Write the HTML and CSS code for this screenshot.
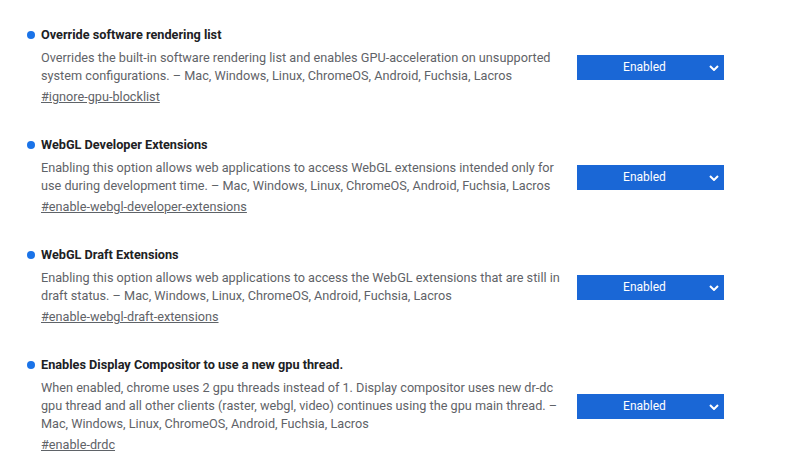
FILE: index.html
```
<!DOCTYPE html>
<html>
<head>
<meta charset="utf-8">
<link rel="stylesheet" href="styles.css">
</head>
<body>
<div class="flags">
  <div class="experiment">
    <h2 class="name"><span class="dot"></span>Override software rendering list</h2>
    <div class="row">
      <p class="desc">Overrides the built-in software rendering list and enables GPU-acceleration on unsupported system configurations. – Mac, Windows, Linux, ChromeOS, Android, Fuchsia, Lacros</p>
      <div class="select"><span>Enabled</span><svg class="chev" viewBox="0 0 10 6" width="10" height="6"><path d="M1 1 L5 5 L9 1" fill="none" stroke="#fff" stroke-width="2"/></svg></div>
    </div>
    <a class="link" href="#">#ignore-gpu-blocklist</a>
  </div>
  <div class="experiment">
    <h2 class="name"><span class="dot"></span>WebGL Developer Extensions</h2>
    <div class="row">
      <p class="desc">Enabling this option allows web applications to access WebGL extensions intended only for use during development time. – Mac, Windows, Linux, ChromeOS, Android, Fuchsia, Lacros</p>
      <div class="select"><span>Enabled</span><svg class="chev" viewBox="0 0 10 6" width="10" height="6"><path d="M1 1 L5 5 L9 1" fill="none" stroke="#fff" stroke-width="2"/></svg></div>
    </div>
    <a class="link" href="#">#enable-webgl-developer-extensions</a>
  </div>
  <div class="experiment">
    <h2 class="name"><span class="dot"></span>WebGL Draft Extensions</h2>
    <div class="row">
      <p class="desc">Enabling this option allows web applications to access the WebGL extensions that are still in draft status. – Mac, Windows, Linux, ChromeOS, Android, Fuchsia, Lacros</p>
      <div class="select"><span>Enabled</span><svg class="chev" viewBox="0 0 10 6" width="10" height="6"><path d="M1 1 L5 5 L9 1" fill="none" stroke="#fff" stroke-width="2"/></svg></div>
    </div>
    <a class="link" href="#">#enable-webgl-draft-extensions</a>
  </div>
  <div class="experiment">
    <h2 class="name"><span class="dot"></span>Enables Display Compositor to use a new gpu thread.</h2>
    <div class="row">
      <p class="desc">When enabled, chrome uses 2 gpu threads instead of 1. Display compositor uses new dr-dc gpu thread and all other clients (raster, webgl, video) continues using the gpu main thread. – Mac, Windows, Linux, ChromeOS, Android, Fuchsia, Lacros</p>
      <div class="select"><span>Enabled</span><svg class="chev" viewBox="0 0 10 6" width="10" height="6"><path d="M1 1 L5 5 L9 1" fill="none" stroke="#fff" stroke-width="2"/></svg></div>
    </div>
    <a class="link" href="#">#enable-drdc</a>
  </div>
</div>
</body>
</html>
```
FILE: styles.css
```
html, body {
  margin: 0;
  padding: 0;
  background: #fff;
}
body {
  font-family: Roboto, "Liberation Sans", sans-serif;
  font-size: 12.7px;
  color: #5f6368;
}
.flags {
  padding: 25px 75px 0 27px;
  display: flex;
  flex-direction: column;
  gap: 29px;
}
.experiment {
  display: flex;
  flex-direction: column;
}
.name {
  margin: 0;
  font-size: 12.7px;
  font-weight: 700;
  line-height: 20px;
  color: #202124;
  display: flex;
  align-items: center;
  gap: 6px;
}
.dot {
  width: 8px;
  height: 8px;
  border-radius: 50%;
  background: #1a73e8;
  flex: none;
}
.row {
  display: grid;
  grid-template-columns: 1fr 147px;
  column-gap: 12px;
  align-items: center;
  padding-left: 14px;
  margin-top: 4px;
}
.desc {
  margin: 0;
  line-height: 18px;
}
.select {
  height: 25px;
  background: #1a67d6;
  color: #fff;
  font-size: 12px;
  display: flex;
  align-items: center;
  justify-content: center;
  padding-right: 12px;
  position: relative;
}
.chev {
  position: absolute;
  right: 5px;
  top: 10px;
}
.link {
  margin: 3px 0 0 14px;
  line-height: 18px;
  color: #5f6368;
  text-decoration: underline;
  align-self: flex-start;
}
```
